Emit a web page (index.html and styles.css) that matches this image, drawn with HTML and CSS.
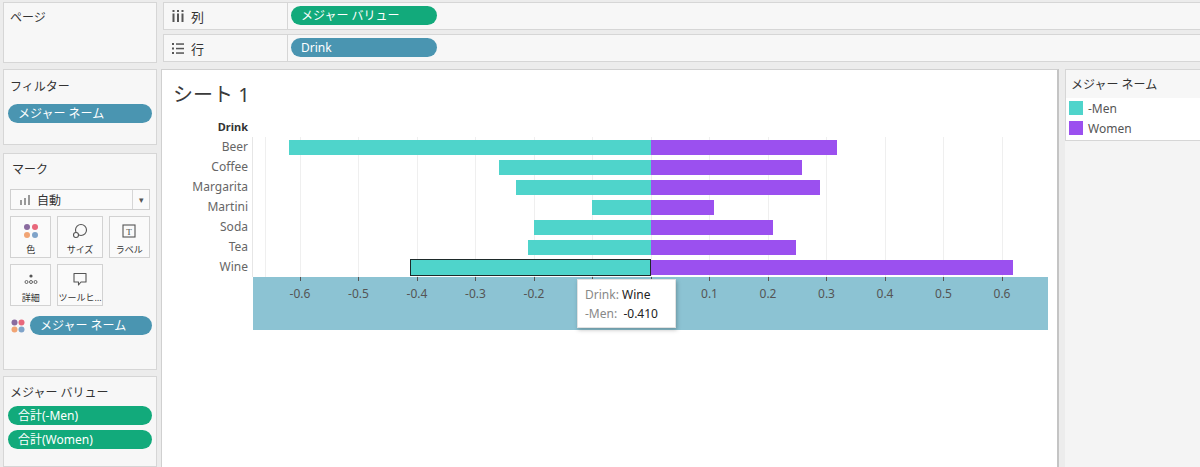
FILE: index.html
```html
<!DOCTYPE html>
<html>
<head>
  <title>シート 1</title>
  <link rel="stylesheet" href="styles.css">
</head>
<body>
  <div class="side">
    <div class="panel page-panel">
      <div class="panel-title">ページ</div>
    </div>

    <div class="panel filter-panel">
      <div class="panel-title">フィルター</div>
      <div class="pill blue">メジャー ネーム</div>
    </div>

    <div class="panel marks-panel">
      <div class="panel-title">マーク</div>
      <div class="mark-select">
        <svg class="auto-icon" width="10" height="10" viewBox="0 0 10 10">
          <rect x="0" y="5" width="2" height="5" fill="#999"/>
          <rect x="4" y="3" width="2" height="7" fill="#999"/>
          <rect x="8" y="0" width="2" height="10" fill="#999"/>
        </svg>
        <span class="mark-type">自動</span>
        <span class="caret">&#9662;</span>
      </div>
      <div class="mark-cards">
        <div class="mark-card">
          <svg width="16" height="16" viewBox="0 0 16 16">
            <circle cx="4" cy="4" r="3" fill="#8a6b9f"/>
            <circle cx="12" cy="4" r="3" fill="#e8677b"/>
            <circle cx="4" cy="12" r="3" fill="#f1a474"/>
            <circle cx="12" cy="12" r="3" fill="#7fa3c9"/>
          </svg>
          <span>色</span>
        </div>
        <div class="mark-card">
          <svg width="16" height="16" viewBox="0 0 16 16">
            <circle cx="9" cy="7" r="5.5" fill="none" stroke="#555" stroke-width="1.1"/>
            <circle cx="4" cy="12" r="2.5" fill="#fff" stroke="#555" stroke-width="1.1"/>
          </svg>
          <span>サイズ</span>
        </div>
        <div class="mark-card">
          <svg width="16" height="16" viewBox="0 0 16 16">
            <rect x="2" y="2" width="12" height="12" fill="none" stroke="#555" stroke-width="1.1"/>
            <text x="8" y="12" text-anchor="middle" font-size="9" font-family="Liberation Serif, serif" fill="#444">T</text>
          </svg>
          <span>ラベル</span>
        </div>
        <div class="mark-card">
          <svg width="16" height="16" viewBox="0 0 16 16">
            <circle cx="8" cy="5" r="1.6" fill="#555"/>
            <circle cx="3.5" cy="11" r="1.5" fill="none" stroke="#555" stroke-width="0.9"/>
            <circle cx="8" cy="11" r="1.5" fill="none" stroke="#555" stroke-width="0.9"/>
            <circle cx="12.5" cy="11" r="1.5" fill="none" stroke="#555" stroke-width="0.9"/>
          </svg>
          <span>詳細</span>
        </div>
        <div class="mark-card">
          <svg width="16" height="16" viewBox="0 0 16 16">
            <path d="M2 2.5 H14 V11 H9 L6.5 14 V11 H2 Z" fill="none" stroke="#555" stroke-width="1.1" stroke-linejoin="round"/>
          </svg>
          <span>ツールヒ…</span>
        </div>
      </div>
      <div class="mark-field">
        <svg width="14" height="14" viewBox="0 0 14 14">
          <circle cx="3.5" cy="3.5" r="3" fill="#8a6b9f"/>
          <circle cx="10.5" cy="3.5" r="3" fill="#e8677b"/>
          <circle cx="3.5" cy="10.5" r="3" fill="#f1a474"/>
          <circle cx="10.5" cy="10.5" r="3" fill="#7fa3c9"/>
        </svg>
        <div class="pill blue">メジャー ネーム</div>
      </div>
    </div>

    <div class="panel values-panel">
      <div class="panel-title">メジャー バリュー</div>
      <div class="pill green">合計(-Men)</div>
      <div class="pill green">合計(Women)</div>
    </div>
  </div>

  <div class="main">
    <div class="shelf">
      <div class="shelf-label">
        <svg width="12" height="12" viewBox="0 0 12 12">
          <rect x="0.5" y="0" width="2" height="2" fill="#555"/>
          <rect x="0.5" y="3.5" width="2" height="8.5" fill="#555"/>
          <rect x="5" y="0" width="2" height="2" fill="#555"/>
          <rect x="5" y="3.5" width="2" height="8.5" fill="#555"/>
          <rect x="9.5" y="0" width="2" height="2" fill="#555"/>
          <rect x="9.5" y="3.5" width="2" height="8.5" fill="#555"/>
        </svg>
        <span>列</span>
      </div>
      <div class="shelf-fields">
        <div class="pill green">メジャー バリュー</div>
      </div>
    </div>
    <div class="shelf">
      <div class="shelf-label">
        <svg width="12" height="11" viewBox="0 0 12 11">
          <rect x="0" y="0" width="2" height="2" fill="#555"/>
          <rect x="4" y="0.3" width="8" height="1.5" fill="#555"/>
          <rect x="0" y="4.5" width="2" height="2" fill="#555"/>
          <rect x="4" y="4.8" width="8" height="1.5" fill="#555"/>
          <rect x="0" y="9" width="2" height="2" fill="#555"/>
          <rect x="4" y="9.3" width="8" height="1.5" fill="#555"/>
        </svg>
        <span>行</span>
      </div>
      <div class="shelf-fields">
        <div class="pill blue">Drink</div>
      </div>
    </div>

    <div class="workspace">
      <div class="sheet">
        <div class="sheet-title">シート 1</div>
        <div class="chart">
          <div class="row-head">Drink</div>
          <div></div>

          <div class="row-labels">
            <div>Beer</div>
            <div>Coffee</div>
            <div>Margarita</div>
            <div>Martini</div>
            <div>Soda</div>
            <div>Tea</div>
            <div>Wine</div>
          </div>
          <div class="plot">
            <div class="bar-row">
              <div class="neg"><div class="bar men" style="width: 362px"></div></div>
              <div class="pos"><div class="bar women" style="width: 186px"></div></div>
            </div>
            <div class="bar-row">
              <div class="neg"><div class="bar men" style="width: 152px"></div></div>
              <div class="pos"><div class="bar women" style="width: 151px"></div></div>
            </div>
            <div class="bar-row">
              <div class="neg"><div class="bar men" style="width: 135px"></div></div>
              <div class="pos"><div class="bar women" style="width: 169px"></div></div>
            </div>
            <div class="bar-row">
              <div class="neg"><div class="bar men" style="width: 59px"></div></div>
              <div class="pos"><div class="bar women" style="width: 63px"></div></div>
            </div>
            <div class="bar-row">
              <div class="neg"><div class="bar men" style="width: 117px"></div></div>
              <div class="pos"><div class="bar women" style="width: 122px"></div></div>
            </div>
            <div class="bar-row">
              <div class="neg"><div class="bar men" style="width: 123px"></div></div>
              <div class="pos"><div class="bar women" style="width: 145px"></div></div>
            </div>
            <div class="bar-row">
              <div class="neg"><div class="bar men selected" style="width: 241px"></div></div>
              <div class="pos"><div class="bar women" style="width: 362px"></div></div>
            </div>
          </div>

          <div></div>
          <div class="axis">
            <div class="tick">-0.6</div>
            <div class="tick">-0.5</div>
            <div class="tick">-0.4</div>
            <div class="tick">-0.3</div>
            <div class="tick">-0.2</div>
            <div class="tick covered"></div>
            <div class="tick covered"></div>
            <div class="tick">0.1</div>
            <div class="tick">0.2</div>
            <div class="tick">0.3</div>
            <div class="tick">0.4</div>
            <div class="tick">0.5</div>
            <div class="tick">0.6</div>
          </div>
        </div>

        <div class="tooltip">
          <div><span class="tip-key">Drink:</span> <span class="tip-val">Wine</span></div>
          <div><span class="tip-key">-Men:</span>&nbsp; <span class="tip-val">-0.410</span></div>
        </div>
      </div>

      <div class="legend-col">
        <div class="legend">
          <div class="legend-title">メジャー ネーム</div>
          <div class="legend-items">
            <div class="legend-item"><span class="swatch men"></span>-Men</div>
            <div class="legend-item"><span class="swatch women"></span>Women</div>
          </div>
        </div>
      </div>
    </div>
  </div>
</body>
</html>
```

FILE: styles.css
```css
body {
  margin: 0;
  height: 467px;
  overflow: hidden;
  display: flex;
  background-color: #ececec;
  font-family: "Noto Sans", "Noto Sans CJK JP", sans-serif;
  font-size: 12px;
  color: #333;
}

/* left column */
.side {
  width: 154px;
  margin: 2px 0 0 3px;
  display: flex;
  flex-direction: column;
}
.panel {
  background-color: #f7f7f7;
  border: 1px solid #d6d6d6;
  box-sizing: border-box;
  padding: 7px 4px 0 4px;
}
.panel-title {
  line-height: 16px;
  padding-left: 2px;
  font-size: 12px;
}
.page-panel {
  height: 61px;
}
.filter-panel {
  margin-top: 6px;
  height: 76px;
  padding-top: 9px;
}
.filter-panel .pill {
  margin-top: 9px;
}
.marks-panel {
  margin-top: 8px;
  height: 217px;
  padding: 8px 6px 0 6px;
}
.values-panel {
  margin-top: 6px;
  flex: 1;
  padding-top: 8px;
}
.values-panel .pill {
  margin-top: 5px;
}
.values-panel .panel-title {
  margin-bottom: 4px;
}

.pill {
  height: 19px;
  line-height: 19px;
  border-radius: 10px;
  color: #fff;
  padding-left: 10px;
  font-size: 12px;
  white-space: nowrap;
}
.pill.blue {
  background-color: #4a95b1;
}
.pill.green {
  background-color: #12aa7b;
}

/* marks card */
.mark-select {
  margin-top: 11px;
  height: 21px;
  box-sizing: border-box;
  border: 1px solid #cfcfcf;
  background-color: #fafafa;
  display: flex;
  align-items: center;
  padding-left: 9px;
}
.mark-type {
  margin-left: 7px;
  font-size: 12px;
  flex: 1;
}
.caret {
  width: 16px;
  border-left: 1px solid #d6d6d6;
  height: 19px;
  line-height: 19px;
  text-align: center;
  font-size: 9px;
  color: #555;
}
.mark-cards {
  margin-top: 6px;
  display: grid;
  grid-template-columns: repeat(3, 1fr);
  gap: 6px;
}
.mark-card {
  height: 42px;
  box-sizing: border-box;
  border: 1px solid #d2d2d2;
  background-color: #fafafa;
  display: flex;
  flex-direction: column;
  align-items: center;
  padding-top: 6px;
  font-size: 9px;
  line-height: 12px;
}
.mark-card span {
  margin-top: 5px;
  white-space: nowrap;
}
.mark-field {
  margin-top: 10px;
  display: flex;
  align-items: center;
  gap: 5px;
  padding-left: 1px;
}
.mark-field .pill {
  flex: 1;
  margin-right: -2px;
}

/* main area */
.main {
  flex: 1;
  margin-left: 4px;
  display: flex;
  flex-direction: column;
  min-width: 0;
}
.shelf {
  margin-left: 2px;
  height: 28px;
  margin-top: 2px;
  box-sizing: border-box;
  border: 1px solid #d6d6d6;
  border-right: none;
  background-color: #f7f7f7;
  display: flex;
}
.shelf + .shelf {
  margin-top: 4px;
}
.shelf-label {
  width: 124px;
  border-right: 1px solid #d6d6d6;
  display: flex;
  align-items: center;
  padding-left: 8px;
  box-sizing: border-box;
  gap: 7px;
  font-size: 13px;
}
.shelf-fields {
  padding: 3px 0 0 3px;
}
.shelf-fields .pill {
  width: 136px;
}

.workspace {
  margin-top: 7px;
  flex: 1;
  display: flex;
}
.sheet {
  position: relative;
  width: 898px;
  box-sizing: border-box;
  background-color: #fff;
  border: 1px solid #d0d0d0;
  border-right: 2px solid #c4c4c4;
  border-bottom: none;
}
.sheet-title {
  padding: 12px 0 0 11px;
  font-size: 20px;
  line-height: 26px;
  color: #3a3a3a;
}

/* chart */
.chart {
  margin-top: 11px;
  display: grid;
  grid-template-columns: 91px 795px;
  grid-template-rows: 18px 140px 53px;
}
.row-head {
  text-align: right;
  padding-right: 5px;
  font-weight: bold;
  font-size: 11px;
  line-height: 16px;
  color: #333;
}
.row-labels {
  text-align: right;
  padding-right: 5px;
  color: #666;
  font-size: 12px;
}
.row-labels div {
  height: 20px;
  line-height: 20px;
}
.plot {
  border-left: 1px solid #e6e6e6;
  margin-left: -1px;
  background-image: repeating-linear-gradient(to right, #efefef 0 1px, transparent 1px 58.5px);
  background-position: 47px 0;
}
.bar-row {
  height: 20px;
  display: flex;
  align-items: center;
  padding-top: 1px;
  box-sizing: border-box;
}
.neg {
  width: 398px;
  display: flex;
  justify-content: flex-end;
}
.pos {
  width: 397px;
  display: flex;
}
.bar {
  height: 15px;
  box-sizing: border-box;
}
.bar.men {
  background-color: #4fd4cb;
}
.bar.women {
  background-color: #9b50ef;
}
.bar.selected {
  border: 1.5px solid #1e2a2a;
  height: 17px;
}
.axis {
  background-color: #8cc3d3;
  display: flex;
  padding-left: 17.75px;
}
.tick {
  width: 58.5px;
  flex-shrink: 0;
  text-align: center;
  padding-top: 8px;
  font-size: 12px;
  color: #555;
}
.tick::before {
  content: "";
  display: block;
  width: 1px;
  height: 4px;
  background-color: #555;
  margin: -8px auto 4px auto;
}

.tooltip {
  position: absolute;
  left: 415px;
  top: 209px;
  width: 99px;
  height: 49px;
  box-sizing: border-box;
  background-color: #fff;
  border: 1px solid #e2e2e2;
  box-shadow: 1px 2px 4px rgba(0, 0, 0, 0.25);
  padding: 5px 0 0 7px;
  font-size: 12px;
  line-height: 19px;
}
.tip-key {
  color: #888;
}
.tip-val {
  color: #222;
}

/* legend */
.legend-col {
  flex: 1;
  margin-left: 6px;
  background-color: #f4f4f4;
}
.legend {
  height: 72px;
  box-sizing: border-box;
  border: 1px solid #d6d6d6;
  border-right: none;
  background-color: #fff;
}
.legend-title {
  height: 28px;
  line-height: 30px;
  padding-left: 5px;
  background-color: #f7f7f7;
  font-size: 12px;
}
.legend-item {
  height: 20px;
  display: flex;
  align-items: center;
  padding-left: 3px;
  gap: 5px;
  color: #555;
  font-size: 12px;
}
.swatch {
  width: 14px;
  height: 14px;
}
.swatch.men {
  background-color: #4fd4cb;
}
.swatch.women {
  background-color: #9b50ef;
}
```
